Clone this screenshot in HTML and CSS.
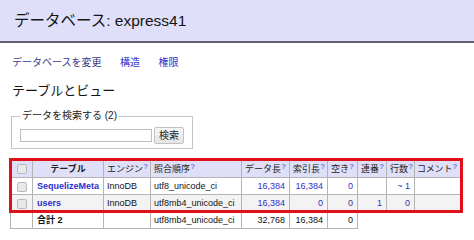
FILE: index.html
```html
<!DOCTYPE html>
<html lang="ja">
<head>
<meta charset="utf-8">
<title>データベース: express41</title>
<link rel="stylesheet" href="styles.css">
</head>
<body>
<h2 class="title">データベース: express41</h2>
<main class="content">
  <nav class="links">
    <a class="visited" href="#">データベースを変更</a>
    <a href="#">構造</a>
    <a href="#">権限</a>
  </nav>
  <h3 class="subtitle">テーブルとビュー</h3>
  <fieldset class="search">
    <legend>データを検索する (2)</legend>
    <div class="search-row">
      <input class="search-input" type="text">
      <button class="search-btn" type="button">検索</button>
    </div>
  </fieldset>
  <div class="table-wrap">
    <table class="tables">
      <colgroup>
        <col class="c-cb"><col class="c-name"><col class="c-engine"><col class="c-coll"><col class="c-data"><col class="c-index"><col class="c-free"><col class="c-auto"><col class="c-rows"><col class="c-comment">
      </colgroup>
      <thead>
        <tr>
          <td class="cb-cell"><span class="cb"></span></td>
          <th class="center">テーブル</th>
          <td>エンジン<a class="q" href="#">?</a></td>
          <td>照合順序<a class="q" href="#">?</a></td>
          <td>データ長<a class="q" href="#">?</a></td>
          <td>索引長<a class="q" href="#">?</a></td>
          <td>空き<a class="q" href="#">?</a></td>
          <td>連番<a class="q" href="#">?</a></td>
          <td>行数<a class="q" href="#">?</a></td>
          <td class="comment-head">コメント<a class="q" href="#">?</a></td>
        </tr>
      </thead>
      <tbody>
        <tr>
          <td class="cb-cell"><span class="cb"></span></td>
          <th><a class="name" href="#">SequelizeMeta</a></th>
          <td>InnoDB</td>
          <td>utf8_unicode_ci</td>
          <td class="num"><a href="#">16,384</a></td>
          <td class="num"><a href="#">16,384</a></td>
          <td class="num"><a href="#">0</a></td>
          <td class="num"></td>
          <td class="num"><a href="#">~ 1</a></td>
          <td></td>
        </tr>
        <tr class="odd">
          <td class="cb-cell"><span class="cb"></span></td>
          <th><a class="name" href="#">users</a></th>
          <td>InnoDB</td>
          <td>utf8mb4_unicode_ci</td>
          <td class="num"><a href="#">16,384</a></td>
          <td class="num"><a href="#">0</a></td>
          <td class="num"><a class="visited" href="#">0</a></td>
          <td class="num"><a href="#">1</a></td>
          <td class="num"><a class="visited" href="#">0</a></td>
          <td></td>
        </tr>
        <tr class="total">
          <td></td>
          <th>合計 2</th>
          <td></td>
          <td>utf8mb4_unicode_ci</td>
          <td class="num">32,768</td>
          <td class="num">16,384</td>
          <td class="num">0</td>
        </tr>
      </tbody>
    </table>
    <div class="highlight"></div>
  </div>
</main>
</body>
</html>
```
FILE: styles.css
```css
html, body {
  margin: 0;
  padding: 0;
  background: #fff;
}
body {
  font-family: "Liberation Sans", "Noto Sans CJK JP", sans-serif;
  color: #111;
}
a {
  color: #2f2fcc;
  text-decoration: none;
}
a.visited {
  color: #3a3a8c;
}
.title {
  margin: 0;
  height: 41px;
  line-height: 41px;
  padding: 0 14px;
  font-size: 15.5px;
  font-weight: normal;
  background: #dfdff9;
  border-bottom: 2px solid #62626f;
  color: #151515;
}
.content {
  padding: 0 0 0 10px;
}
.links {
  display: flex;
  gap: 18.5px;
  margin: 14px 0 0 2px;
  font-size: 10px;
  line-height: 12px;
}
.subtitle {
  margin: 14px 0 0 2px;
  font-size: 13px;
  line-height: 16px;
  font-weight: normal;
  color: #151515;
}
.search {
  margin: 11px 0 0 1px;
  width: 182px;
  box-sizing: border-box;
  border: 1px solid #c4c4c4;
  padding: 5px 8px 4px;
  min-width: 0;
}
.search legend {
  padding: 0 2px;
  font-size: 10px;
  line-height: 12px;
  color: #222;
}
.search-row {
  display: flex;
  align-items: center;
  gap: 2px;
}
.search-input {
  box-sizing: border-box;
  width: 132px;
  height: 13px;
  margin: 0;
  padding: 0;
  border: 1px solid #bdbdbd;
  background: #fff;
}
.search-btn {
  box-sizing: border-box;
  width: 31px;
  height: 17px;
  margin: 0;
  padding: 0;
  border: 1px solid #c2c2c2;
  border-radius: 2px;
  background: linear-gradient(#f6f6f6, #e6e6e6);
  font-family: "Liberation Sans", "Noto Sans CJK JP", sans-serif;
  font-size: 10px;
  line-height: 15px;
  color: #222;
}
.table-wrap {
  position: relative;
  margin-top: 10px;
  width: 452px;
}
.tables {
  border-collapse: collapse;
  table-layout: fixed;
  width: 452px;
  font-size: 9px;
  line-height: 12px;
}
.c-cb { width: 22px; }
.c-name { width: 71px; }
.c-engine { width: 47px; }
.c-coll { width: 91px; }
.c-data { width: 48px; }
.c-index { width: 38px; }
.c-free { width: 30px; }
.c-auto { width: 29px; }
.c-rows { width: 28px; }
.c-comment { width: 48px; }
.tables td, .tables th {
  border: 1px solid #b4b4b4;
  padding: 0 3px;
  text-align: left;
  white-space: nowrap;
  overflow: hidden;
  vertical-align: middle;
}
.tables th {
  font-weight: bold;
  padding-left: 4px;
}
.tables thead tr {
  height: 18px;
  background: #dfdff7;
}
.tables thead td, .tables thead th {
  color: #222;
  overflow: visible;
  padding-right: 0;
}
.tables thead td.comment-head {
  padding-left: 2px;
  letter-spacing: -0.2px;
}
.tables th.center {
  text-align: center;
  padding: 0;
}
.tables tbody tr {
  height: 17px;
}
.tables tbody tr.odd {
  background: #f3f3f3;
}
.tables tbody tr.total {
  background: #fff;
  height: 17px;
}
.tables td.num {
  text-align: right;
  padding-right: 4px;
}
.tables .cb-cell {
  padding: 0;
  text-align: center;
}
.cb {
  display: inline-block;
  width: 8px;
  height: 8px;
  border: 1px solid #b8b8b8;
  border-radius: 2px;
  background: #e9e9e9;
  vertical-align: middle;
}
.name {
  font-weight: bold;
  color: #2f2fcc;
}
.q {
  font-size: 7.5px;
  vertical-align: 3px;
  line-height: 0;
  margin-left: 0.5px;
  color: #3a3ad6;
}
.highlight {
  position: absolute;
  left: -1px;
  top: -1px;
  width: 454px;
  height: 55px;
  box-sizing: border-box;
  border: 3px solid #e0101a;
  pointer-events: none;
}
```
